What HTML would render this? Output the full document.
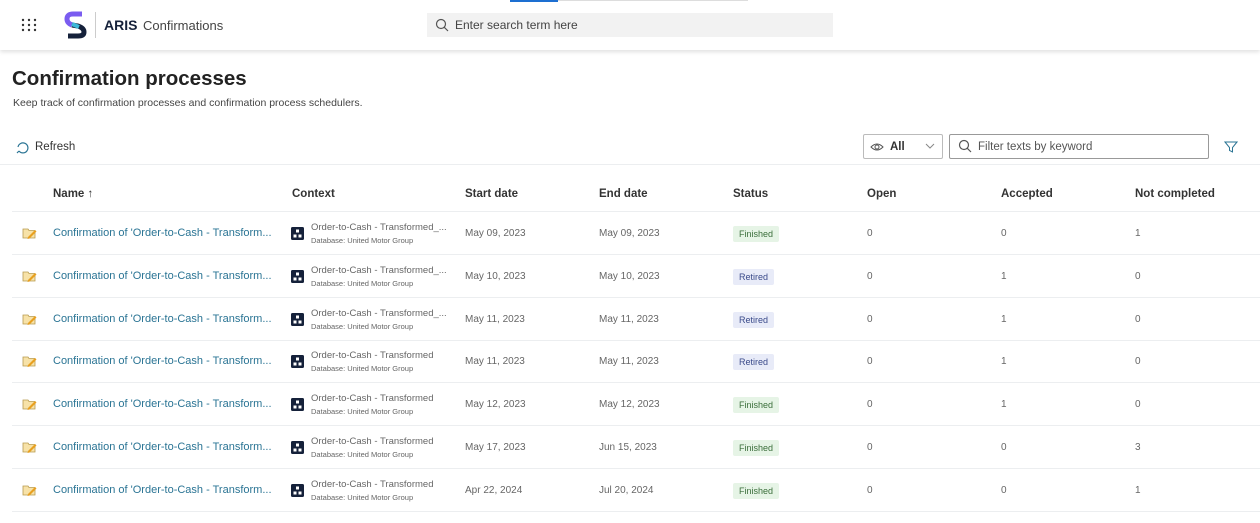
<!DOCTYPE html>
<html><head><meta charset="utf-8"><style>
*{box-sizing:border-box;margin:0;padding:0}
body{width:1260px;height:523px;overflow:hidden;background:#fff;font-family:"Liberation Sans",sans-serif;color:#333;position:relative}
.abs{position:absolute}
.top{position:absolute;left:0;top:0;width:1260px;height:50px;background:#fff;box-shadow:0 2px 4px rgba(0,0,0,.12)}
.hdr{position:absolute;top:188px;font-size:11.5px;color:#333;font-weight:bold}
.row{position:absolute;left:12px;width:1248px;height:43px;border-bottom:1px solid #eceef0}
.row div{position:absolute;font-size:10px;color:#666}
.nm{left:41px;top:15px;font-size:11px!important;color:#2a7494!important}
.c1{left:299px;top:10px;font-size:9.5px!important}
.c2{left:299px;top:24px;font-size:7.5px!important}
.badge{top:14px;padding:3px 6px;font-size:9px!important;border-radius:2px}
.fin{background:#e6f4e6;color:#3b6e3b!important}
.ret{background:#e8ebf8;color:#3a4a8a!important}
</style></head><body>
<div class="top">
 <div class="abs" style="left:510px;top:0;width:48px;height:2px;background:#1d6fd1"></div>
 <div class="abs" style="left:558px;top:0;width:190px;height:1px;background:#ddd"></div>
 <svg class="abs" style="left:21px;top:18px" width="16" height="14"><g fill="#333"><circle cx="2" cy="2" r="1.2"/><circle cx="8" cy="2" r="1.2"/><circle cx="14" cy="2" r="1.2"/><circle cx="2" cy="7" r="1.2"/><circle cx="8" cy="7" r="1.2"/><circle cx="14" cy="7" r="1.2"/><circle cx="2" cy="12" r="1.2"/><circle cx="8" cy="12" r="1.2"/><circle cx="14" cy="12" r="1.2"/></g></svg>
 <svg class="abs" style="left:64px;top:11px" width="24" height="28"><path d="M18 3 H9 Q3 3 3 8 Q3 12 8 14" stroke="#7a5cf0" stroke-width="5" fill="none"/><path d="M8 14 L14 15 Q20 17 20 21 Q20 25 14 25 H4" stroke="#15213a" stroke-width="5" fill="none"/><path d="M8 13 L15 16" stroke="#3cb8d8" stroke-width="4"/></svg>
 <div class="abs" style="left:95px;top:12px;width:1px;height:26px;background:#ccc"></div>
 <div class="abs" style="left:104px;top:17px;font-size:14px;font-weight:bold;color:#15213a">ARIS</div>
 <div class="abs" style="left:143px;top:18px;font-size:13px;color:#444">Confirmations</div>
 <div class="abs" style="left:427px;top:13px;width:406px;height:24px;background:#f2f2f2"></div>
 <svg class="abs" style="left:435px;top:18px" width="14" height="14"><circle cx="6" cy="6" r="4.5" stroke="#555" fill="none" stroke-width="1.2"/><path d="M9.3 9.3 L13 13" stroke="#555" stroke-width="1.2"/></svg>
 <div class="abs" style="left:455px;top:18px;font-size:12px;color:#444">Enter search term here</div>
</div>
<div class="abs" style="left:12px;top:67px;font-size:20.5px;font-weight:bold;color:#222">Confirmation processes</div>
<div class="abs" style="left:13px;top:97px;font-size:10.5px;color:#444">Keep track of confirmation processes and confirmation process schedulers.</div>
<svg class="abs" style="left:16px;top:141px" width="13" height="13"><path d="M3 10 A5 5 0 1 0 2 6" stroke="#2a7494" fill="none" stroke-width="1.2"/><path d="M1 12 L3 10" stroke="#2a7494" stroke-width="1.2"/></svg>
<div class="abs" style="left:35px;top:141px;font-size:11.5px;color:#333">Refresh</div>
<div class="abs" style="left:863px;top:134px;width:80px;height:25px;border:1px solid #bbb;border-radius:2px"></div>
<svg class="abs" style="left:870px;top:142px" width="14" height="10"><path d="M1 5 Q7 -1 13 5 Q7 11 1 5Z" stroke="#555" fill="none"/><circle cx="7" cy="5" r="2" stroke="#555" fill="none"/></svg>
<div class="abs" style="left:890px;top:141px;font-size:11.5px;font-weight:bold;color:#333">All</div>
<svg class="abs" style="left:925px;top:143px" width="10" height="6"><path d="M1 1 L5 5 L9 1" stroke="#888" fill="none"/></svg>
<div class="abs" style="left:949px;top:134px;width:260px;height:25px;border:1px solid #999;border-radius:2px"></div>
<svg class="abs" style="left:958px;top:139px" width="14" height="14"><circle cx="6" cy="6" r="4.5" stroke="#555" fill="none" stroke-width="1.2"/><path d="M9.3 9.3 L13 13" stroke="#555" stroke-width="1.2"/></svg>
<div class="abs" style="left:978px;top:141px;font-size:11.5px;color:#555">Filter texts by keyword</div>
<svg class="abs" style="left:1224px;top:140px" width="14" height="14"><path d="M1 2 H13 L8.5 7.5 V12 L5.5 10.5 V7.5Z" stroke="#2a7494" fill="none"/></svg>
<div class="abs" style="left:0;top:164px;width:1260px;height:1px;background:#eceef0"></div>
<div class="hdr" style="left:53px">Name ↑</div>
<div class="hdr" style="left:292px">Context</div>
<div class="hdr" style="left:465px">Start date</div>
<div class="hdr" style="left:599px">End date</div>
<div class="hdr" style="left:733px">Status</div>
<div class="hdr" style="left:867px">Open</div>
<div class="hdr" style="left:1001px">Accepted</div>
<div class="hdr" style="left:1135px">Not completed</div>
<div class="abs" style="left:12px;top:211px;width:1248px;height:1px;background:#eceef0"></div>
<div id="rows"></div>
<script>
var d=[["Transformed_...","May 09, 2023","May 09, 2023","Finished","0","0","1"],
["Transformed_...","May 10, 2023","May 10, 2023","Retired","0","1","0"],
["Transformed_...","May 11, 2023","May 11, 2023","Retired","0","1","0"],
["Transformed","May 11, 2023","May 11, 2023","Retired","0","1","0"],
["Transformed","May 12, 2023","May 12, 2023","Finished","0","1","0"],
["Transformed","May 17, 2023","Jun 15, 2023","Finished","0","0","3"],
["Transformed","Apr 22, 2024","Jul 20, 2024","Finished","0","0","1"]];
var h="";d.forEach(function(r,i){var t=212+i*42.8;
h+='<div class="row" style="top:'+t+'px">'+
'<svg style="position:absolute;left:10px;top:14px" width="16" height="14"><path d="M1 3 H6 L7 4.5 H13 V12 H1Z" fill="#f7e2a8" stroke="#b89a4e" stroke-width=".8"/><path d="M6 11 L13 4 L14.5 5.5 L7.5 12.5 L5.5 13Z" fill="#e8a020"/></svg>'+
'<div class="nm">Confirmation of \'Order-to-Cash - Transform...</div>'+
'<svg style="position:absolute;left:279px;top:15px" width="13" height="13"><rect width="13" height="13" rx="1.5" fill="#15213a"/><rect x="5" y="2.5" width="3" height="3" fill="#fff"/><rect x="2.5" y="7.5" width="3" height="3" fill="#fff"/><rect x="7.5" y="7.5" width="3" height="3" fill="#fff"/></svg>'+
'<div class="c1">Order-to-Cash - '+r[0]+'</div><div class="c2">Database: United Motor Group</div>'+
'<div style="left:453px;top:16px">'+r[1]+'</div><div style="left:587px;top:16px">'+r[2]+'</div>'+
'<div class="badge '+(r[3]=="Finished"?"fin":"ret")+'" style="left:721px">'+r[3]+'</div>'+
'<div style="left:855px;top:16px">'+r[4]+'</div><div style="left:989px;top:16px">'+r[5]+'</div><div style="left:1123px;top:16px">'+r[6]+'</div></div>';});
document.getElementById("rows").innerHTML=h;
</script>
</body></html>
